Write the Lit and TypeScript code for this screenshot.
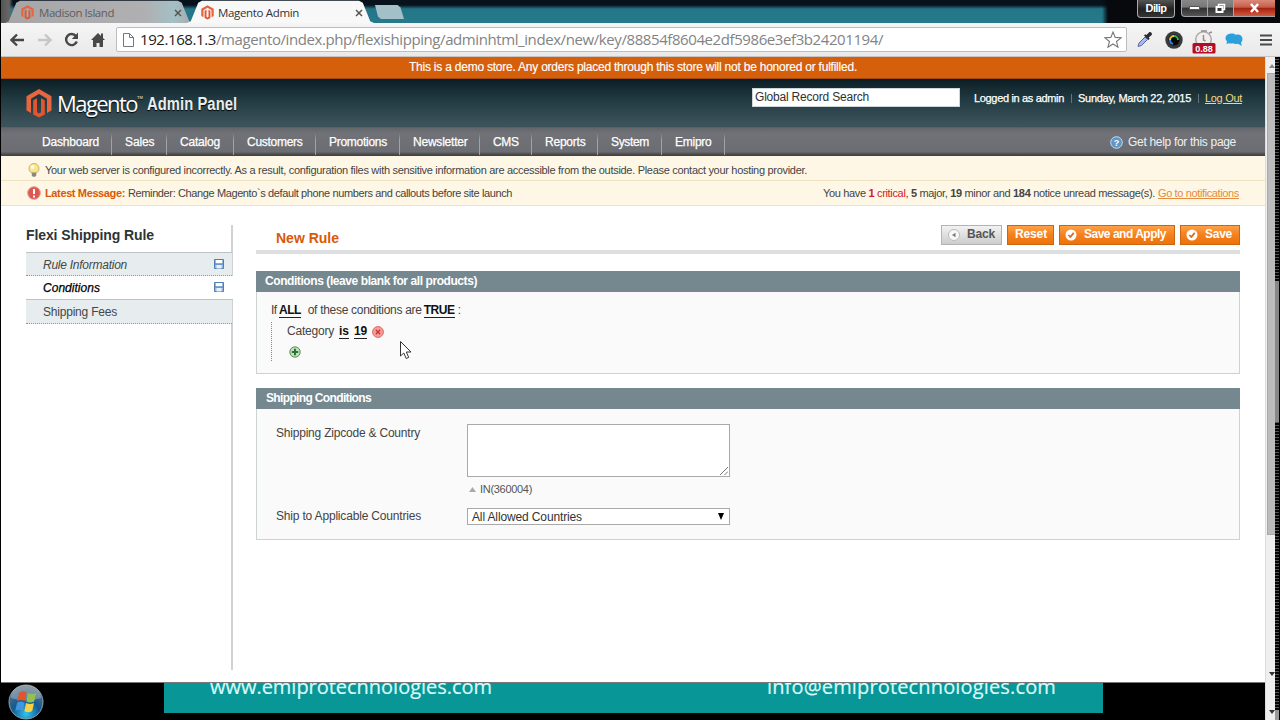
import { LitElement, html, css } from "lit";
import { customElement, property } from "lit/decorators.js";

/** Text run whose tracking is computed so that it fills a given width. */
@customElement("fit-text")
class FitText extends LitElement {
  @property({ type: Number }) w = 0;
  static styles = css`
    :host { display: inline-block; white-space: nowrap; flex: none; }
  `;
  render() { return html`<slot></slot>`; }
  firstUpdated() {
    const n = (this.textContent || "").length;
    const natural = parseFloat(getComputedStyle(this).width);
    if (this.w && n) this.style.letterSpacing = ((this.w - natural) / n).toFixed(4) + "px";
  }
}

const magento = (cls: string) => html`<svg class=${cls} viewBox="0 0 26 29">
  <path d="M13 0 L25.500 7.200 V21.500 L21 24 V9.800 L13 5.100 L5 9.800 V24 L.5 21.500 V7.200 Z" fill="#e8663f"/>
  <path d="M7.200 11.200 L11 9.200 V23.200 L13 24.400 L15 23.200 V9.200 L18.800 11.200 V25.400 L13 28.600 L7.200 25.400 Z" fill="#e2552d"/>
</svg>`;

const disk = html`<svg class="disk" viewBox="0 0 10 10"><path d="M.5.5h9v9h-9z" fill="#9ab9dc" stroke="#4f7db5"/><path d="M2 1h6v3.500H2z" fill="#fff"/><path d="M2.500 6h5v3.500h-5z" fill="#e8f0fa"/><path d="M1 5h8" stroke="#4778b0"/></svg>`;

const check = html`<svg class="bi" viewBox="0 0 12 12"><circle cx="6" cy="6" r="5.500" fill="#fff"/><path d="M3.400 6l2 2L8.700 3.900" fill="none" stroke="#d9681c" stroke-width="1.700"/></svg>`;

const NAV: [string, number, number][] = [
  ["Dashboard", 83, 57], ["Sales", 55, 29.5], ["Catalog", 67, 40], ["Customers", 82, 55.500],
  ["Promotions", 84, 58], ["Newsletter", 80, 54.500], ["CMS", 52, 25.500], ["Reports", 66, 40.500],
  ["System", 64, 38], ["Emipro", 63, 36.500],
];

@customElement("app-root")
class AppRoot extends LitElement {
  static styles = css`
    :host { display: block; width: 1280px; height: 720px; overflow: hidden; background: #000; font: 12px/16px "Liberation Sans", Arial, sans-serif; color: #2f2f2f; }
    * { box-sizing: border-box; }
    svg { display: block; flex: none; }
    .window { display: flex; flex-direction: column; height: 720px; padding-left: 1px; }

    .tabs { height: 23px; display: flex; padding-left: 4px; font: 11.5px/16px "Open Sans", "Noto Sans", sans-serif;
      background: linear-gradient(90deg, #555 0, #666 8px, transparent 12px), linear-gradient(90deg, transparent 1101px, #07090d 1107px), linear-gradient(#07121d 0 5px, #237688 9px, #267a8c 100%); }
    .tab { height: 23px; display: flex; align-items: center; padding: 2px 11px 0 16px; clip-path: polygon(0 100%, 2% 92%, 6% 12%, 8% 3%, 92% 3%, 94% 12%, 98% 92%, 100% 100%); }
    .tab1 { width: 188px; background: linear-gradient(90deg, #a6a6a8, #b0b0b2 75%, #a3c0c5 90%, #a7a9ac); color: #5d5d60; }
    .tab2 { width: 187px; margin-left: -6px; padding-left: 14px; background: #f8f8f8; color: #333; }
    .fav { width: 13px; height: 15px; margin-right: 5px; }
    .tab2 .fav { margin-right: 4px; }
    .tab .x { margin-left: auto; width: 8px; height: 8px; }
    .newtab { width: 29px; height: 14px; margin: 5px 0 0 1px; background: #a3c0c8; clip-path: polygon(0 0, 78% 0, 88% 18%, 100% 100%, 20% 100%, 10% 80%); }
    .winbtns { margin-left: auto; display: flex; height: 18px; padding-right: 5px; }
    .user { width: 38px; height: 18px; margin-right: 6px; border: 1px solid #aaa; border-top: 0; border-radius: 0 0 4px 4px; background: linear-gradient(#555, #222 55%, #333); color: #fff; font: bold 11px/16px "Liberation Sans"; text-align: center; }
    .ctl { height: 17px; border: 1px solid #a5a5a5; border-top: 0; display: flex; align-items: center; justify-content: center; background: linear-gradient(#888, #777 45%, #303030 50%, #555); }
    .min { width: 27px; border-radius: 0 0 0 4px; } .res { width: 26px; border-left: 0; } .cls { width: 41px; border-left: 0; border-right: 0; background: linear-gradient(#d98a7a, #c85c48 45%, #a52210 52%, #d05a40); }

    .toolbar { height: 34px; display: flex; align-items: center; background: linear-gradient(#f5f5f5, #e9e9e9); border-bottom: 1px solid #c9c4bf; padding: 0 5px 0 9px; }
    .back { width: 14px; height: 14px; } .fwd { width: 14px; height: 14px; margin-left: 14px; } .reload { width: 15px; height: 15px; margin-left: 12px; } .home { width: 14px; height: 15px; margin-left: 12px; }
    .omni { width: 1011px; height: 25px; margin-left: 11px; border: 1px solid #bdbdbd; border-radius: 2px; background: #fff; display: flex; align-items: center; padding: 0 4px 0 6px; font: 15px/23px "Open Sans", "Noto Sans", sans-serif; color: #838383; }
    .omni b { font-weight: 400; color: #222; }
    .page { width: 11px; height: 14px; margin-right: 6px; }
    .star { width: 18px; height: 17px; margin-left: auto; }
    .ext { display: flex; align-items: center; flex: 1; }
    .pick { width: 17px; height: 17px; margin-left: 9px; } .cam { width: 18px; height: 18px; margin-left: 12px; }
    .clock { width: 24px; height: 26px; margin: 6px 0 0 9px; } .chat { width: 18px; height: 14px; margin-left: 9px; } .menu { width: 12px; height: 12px; margin-left: auto; margin-right: 3px; }

    .view { display: flex; height: 663px; }
    .doc { width: 1264px; display: flex; flex-direction: column; background: #fff; }
    .demo { height: 22px; background: #d65f0c; color: #fff; display: flex; padding: 2px 0 0 408px; line-height: 17px; border-bottom: 1px solid #a54a0d; -webkit-text-stroke: .15px #fff; }
    .head { height: 49px; display: flex; background: linear-gradient(#0c1d24, #203840 40%, #3c535b 95%); color: #fff; padding-left: 25px; border-bottom: 1px solid #53646a; }
    .logo { width: 26px; height: 29px; margin: 10px 5px 0 0; }
    .brand { font: 22px/26px "Open Sans", "Noto Sans", sans-serif; margin-top: 11px; width: 84px; text-shadow: 0 1px 1px #000; display: flex; }
    .tm { font: 4px/8px "Liberation Sans"; padding-top: 4px; }
    .panel { font: bold 18px/24px "Liberation Sans"; width: 92px; margin: 13px 0 0 6px; color: #e8eeee; text-shadow: 0 1px 1px #000; transform: scaleX(.82); transform-origin: left; }
    .search { width: 208px; height: 19px; margin: 9px 14px 0 auto; background: #fff; border: 1px solid #ccd5d8; color: #303030; padding: 0 2px; line-height: 17px; }
    .acct { display: flex; font-size: 11px; line-height: 14px; margin-top: 12px; padding-right: 23px; -webkit-text-stroke: .25px #fff; }
    .acct i { width: 1px; height: 9px; margin: 3px 6.5px 0; background: #66777b; }
    .acct a { color: #f6d77e; -webkit-text-stroke: 0; }
    a fit-text { text-decoration: underline; }
    .nav { height: 28px; display: flex; background: linear-gradient(#63666b, #707277 20%, #6b6d72 85%, #444 96%); color: #fff; padding-left: 28px; line-height: 15px; -webkit-text-stroke: .25px #fff; }
    .nav div { padding: 7px 0 0 13px; height: 27px; background: linear-gradient(transparent 5px, #a1a3a6 12px) right / 1px 100% no-repeat; }
    .help { margin-left: auto; display: flex; padding: 7px 29px 0 0; color: #f1f1f1; -webkit-text-stroke: 0; }
    .help svg { width: 13px; height: 13px; margin: 1px 5px 0 0; }
    .note { height: 25px; display: flex; align-items: center; background: #fef7e6; border-bottom: 1px solid #eee2c2; padding: 3px 26px 0 26px; font-size: 11px; color: #444; }
    .note2 { padding-top: 0; }
    .note svg { width: 14px; height: 14px; margin-right: 4px; }
    .note .lm { color: #d85909; font-weight: 700; margin-right: 3px; }
    .note .right { margin-left: auto; } .crit { color: #d0202b; } .note a { color: #e58a3e; margin-left: 3px; }

    .body { flex: 1; display: flex; padding: 19px 25px 0 25px; min-height: 0; }
    .side { width: 207px; height: 445px; border-right: 2px solid #d0d2d3; }
    .side h3 { margin: 0; height: 27px; font-size: 14px; line-height: 20px; color: #2d3434; }
    .side ul { margin: 0; padding: 0; list-style: none; }
    .side li { height: 24px; width: 206px; display: flex; align-items: center; background: #e7ecee; border-bottom: 1px dotted #8f9999; padding: 1px 8px 0 17px; color: #424848; }
    .side li.first { border-top: 1px solid #bdc4c7; font-style: italic; }
    .side li.on { background: #fff; border-bottom: 1px solid #bbc2c5; font-style: italic; color: #000; width: 207px; padding-right: 9px; -webkit-text-stroke: .25px #000; }
    .disk { width: 10px; height: 10px; margin: -2px 0 0 auto; }
    .main { flex: 1; padding-left: 23px; }
    .title { height: 29px; border-bottom: 4px solid #dedfe1; display: flex; padding-left: 20px; }
    .title h2 { margin: 5px auto 0 0; font-size: 14px; line-height: 17px; color: #d85909; }
    .btn { height: 20px; border: 1px solid #c9660f; background: linear-gradient(#ffa044, #f4801e 50%, #ee7208); color: #fff; font: bold 12px/17px "Liberation Sans"; display: flex; margin-left: 5px; padding-left: 7px; }
    .bi { width: 12px; height: 12px; margin: 3px 7px 0 -2px; }
    .b1 { width: 61px; border-color: #b3b3b3; background: linear-gradient(#f2f2f2, #ccc); color: #555; padding-left: 8px; } .b2 { width: 47px; } .b3 { width: 116px; } .b4 { width: 60px; }
    .head4 { height: 21px; background: #75888f; color: #fff; font-weight: 700; padding: 2px 0 0 9px; line-height: 16px; }
    .box { border: 1px solid #cdd2d3; border-top: 0; background: #fafafa; color: #444; }
    .c1 { margin-top: 17px; } .bx1 { height: 82px; padding: 10px 0 0 14px; }
    .row { display: flex; align-items: center; height: 16px; }
    .row u { color: #111; font-weight: 700; text-decoration: none; border-bottom: 1px solid #222; line-height: 12px; height: 14px; margin-top: 1px; }
    .true { margin: 0 3px 0 2px; }
    .op { margin-left: 5px; }
    .tree { margin-top: 4px; height: 39px; border-left: 1px dotted #888; padding: 1px 0 0 15px; }
    .dot { width: 12px; height: 12px; }
    .plus { margin: 7px 0 0 2px; } .del { margin: 2px 0 0 5px; }
    .c2 { margin-top: 14px; padding-left: 10px; } .bx2 { height: 131px; padding: 14px 0 0 19px; }
    .field { display: flex; }
    .field label { width: 191px; padding-top: 2px; }
    .area { width: 263px; height: 53px; margin-top: 1px; border: 1px solid #a9a9a9; background: #fff; display: flex; align-items: flex-end; justify-content: flex-end; }
    .area svg { width: 8px; height: 8px; margin: 0 1px 1px 0; }
    .hint { display: flex; align-items: center; font-size: 11px; margin: 4px 0 11px 193px; color: #555; }
    .hint svg { width: 7px; height: 5px; margin: 0 4px 0 0; }
    .sel { width: 263px; height: 17px; border: 1px solid #a9a9a9; background: #fff; color: #333; display: flex; align-items: center; padding: 0 5px 0 4px; line-height: 14px; }
    .sel svg { width: 6px; height: 7px; margin-left: auto; }
    .f2 label { padding-top: 0; line-height: 17px; }
    .cursor { position: absolute; left: 399px; top: 340px; width: 13px; height: 20px; }

    .task { height: 38px; background: #000; display: flex; border-top: 1px solid #777; overflow: hidden; }
    .orb { width: 36px; height: 36px; margin: 1px 0 0 7px; }
    .banner { width: 939px; height: 30px; margin-left: 120px; background: #089796; color: #d9fbfb; display: flex; overflow: hidden; font: 20px/26px "Open Sans", "Noto Sans", sans-serif; padding-left: 46px; -webkit-text-stroke: .2px #d9fbfb; }
    .banner fit-text { margin-top: -9px; height: 30px; } .banner .mail { margin-left: 275px; }
    .scroll { width: 10px; background: #efefef; display: flex; flex-direction: column; align-items: flex-end; border-left: 1px solid #ddd; }
    .thumb { width: 8px; height: 462px; background: #bcbcbc; border: 1px solid #aaa; border-right: 0; }
    .ar { width: 6px; height: 4px; }
    .u { margin: 7px 0 5px; } .d1 { margin-top: 137px; } .d2 { margin-top: 34px; }
    .noise { flex: 1; background: linear-gradient(transparent 224px, #888 224px 365px, transparent 365px 653px, #999 653px), repeating-linear-gradient(#050505 0 2px, #555 2px 3px); border-right: 1px solid #000; }
  `;

  render() {
    const x = html`<svg class="x" viewBox="0 0 8 8"><path d="M1 1l6 6M7 1l-6 6" stroke="#555" stroke-width="1.500"/></svg>`;
    return html`<div class="window">
      <div class="tabs">
        <div class="tab tab1">${magento("fav")}<fit-text w="75">Madison Island</fit-text>${x}</div>
        <div class="tab tab2">${magento("fav")}<fit-text w="81">Magento Admin</fit-text>${x}</div>
        <div class="newtab"></div>
        <div class="winbtns">
          <div class="user"><fit-text w="21">Dilip</fit-text></div>
          <div class="ctl min"><svg width="11" height="4"><path d="M.5.5h10v3H.5z" fill="#fff" stroke="#555"/></svg></div>
          <div class="ctl res"><svg width="11" height="11" viewBox="0 0 11 11"><path d="M3.500 3V1.500h6v5H8" fill="none" stroke="#fff" stroke-width="1.500"/><path d="M1.500 4h6v5h-6z" fill="none" stroke="#fff" stroke-width="2"/></svg></div>
          <div class="ctl cls"><svg width="11" height="10" viewBox="0 0 11 10"><path d="M2 1l7 8M9 1L2 9" stroke="#fff" stroke-width="2.500"/></svg></div>
        </div>
      </div>
      <div class="toolbar">
        <svg class="back" viewBox="0 0 14 14"><path d="M14 7H2M7 1.500L1.500 7L7 12.500" fill="none" stroke="#454545" stroke-width="2.300"/></svg>
        <svg class="fwd" viewBox="0 0 14 14"><path d="M0 7h12M7 1.500L12.500 7L7 12.500" fill="none" stroke="#c6c6c6" stroke-width="2.300"/></svg>
        <svg class="reload" viewBox="0 0 15 15"><path d="M12 4.200A5.500 5.500 0 1 0 12.800 9.500" fill="none" stroke="#484848" stroke-width="2.400"/><path d="M14 .5V7H7.800z" fill="#484848"/></svg>
        <svg class="home" viewBox="0 0 14 15"><path d="M7 1L0 8h2v7h3.500v-4h3v4H12V8h2L12 6V1.500H10V4z" fill="#484848"/></svg>
        <div class="omni">
          <svg class="page" viewBox="0 0 11 14"><path d="M.5.5h6l4 4v9H.5zM6.500.5v4h4" fill="#fff" stroke="#777"/></svg>
          <fit-text w="743"><b>192.168.1.3</b>/magento/index.php/flexishipping/adminhtml_index/new/key/88854f8604e2df5986e3ef3b24201194/</fit-text>
          <svg class="star" viewBox="0 0 18 17"><path d="M9 1l2.200 5.400 5.800.4-4.500 3.700 1.500 5.700L9 13l-5 3.200 1.500-5.700L1 6.800l5.800-.4z" fill="#fff" stroke="#777" stroke-width="1.100"/></svg>
        </div>
        <div class="ext">
          <svg class="pick" viewBox="0 0 17 17"><path d="M2 15.500L3 12l6-6 2.500 2.500-6 6z" fill="#a9b8ec" stroke="#5868a8"/><path d="M8 4.500l4.500 4.500 1.200-1.200-1-1.300 3-2.500c1-1.500-1-3.500-2.500-2.700L10.500 4 9.200 3.200z" fill="#292b30"/></svg>
          <svg class="cam" viewBox="0 0 18 18"><circle cx="9" cy="9" r="8.700" fill="#3a3a3c"/><circle cx="9" cy="9" r="5.500" fill="#080808"/><path d="M5 9a4 4 0 0 1 4-4" stroke="#e8c52c" stroke-width="2" fill="none"/><path d="M9 5a4 4 0 0 1 4 4" stroke="#36b34a" stroke-width="2" fill="none"/><path d="M5 9a4 4 0 0 0 3 3.900" stroke="#2f7fe0" stroke-width="2" fill="none"/></svg>
          <svg class="clock" viewBox="0 0 24 26"><circle cx="11.500" cy="9.500" r="7.800" fill="#f2eeee" stroke="#b0a8a8" stroke-width="1.500"/><path d="M9 1h6M17 3l3-1M11.500 5v5l2 1" stroke="#9c8c8c" stroke-width="1.500" fill="none"/><rect x=".5" y="13" width="23" height="10.500" rx="1.500" fill="#b50c26"/><text x="12" y="21.500" font-family="Liberation Sans" font-weight="700" font-size="9" text-anchor="middle" fill="#fff">0.88</text></svg>
          <svg class="chat" viewBox="0 0 18 14"><path d="M6 .5c3 0 3.500.5 4.500 1.200C15 .8 17.500 3 17.500 6c0 2-.8 3-1.500 3.500l.8 3.500-3.800-2.200c-2 .5-4 .2-5-.6-1.500.5-3 .3-4 0L1.500 11l.5-2.500C-1 5.500.5.8 6 .5z" fill="#2ba0dc"/></svg>
          <svg class="menu" viewBox="0 0 12 12"><path d="M0 1.500h12M0 6h12M0 10.500h12" stroke="#4a4a4a" stroke-width="2.200"/></svg>
        </div>
      </div>
      <div class="view">
        <div class="doc">
          <div class="demo"><fit-text w="448">This is a demo store. Any orders placed through this store will not be honored or fulfilled.</fit-text></div>
          <div class="head">
            ${magento("logo")}
            <div class="brand"><fit-text w="80">Magento</fit-text><span class="tm">TM</span></div>
            <div class="panel"><fit-text w="110">Admin Panel</fit-text></div>
            <div class="search"><fit-text w="114">Global Record Search</fit-text></div>
            <div class="acct"><fit-text w="90">Logged in as admin</fit-text><i></i><fit-text w="113">Sunday, March 22, 2015</fit-text><i></i><a><fit-text w="37">Log Out</fit-text></a></div>
          </div>
          <div class="nav">
            ${NAV.map(([t, w, f]) => html`<div style="width:${w}px"><fit-text w=${f}>${t}</fit-text></div>`)}
            <span class="help"><svg viewBox="0 0 13 13"><circle cx="6.500" cy="6.500" r="5.800" fill="#5f96c8" stroke="#c5def2"/><text x="6.500" y="9.800" font-family="Liberation Sans" font-size="9" font-weight="700" text-anchor="middle" fill="#fff">?</text></svg><fit-text w="108">Get help for this page</fit-text></span>
          </div>
          <div class="note">
            <svg viewBox="0 0 14 14"><circle cx="7" cy="5.500" r="5" fill="#fbe58c" stroke="#c9b06a"/><circle cx="5.500" cy="4" r="2" fill="#fffbe0"/><path d="M4.800 9.500h4.400v3l-1 1.200H5.800l-1-1.200z" fill="#8d8878"/></svg>
            <fit-text w="762">Your web server is configured incorrectly. As a result, configuration files with sensitive information are accessible from the outside. Please contact your hosting provider.</fit-text>
          </div>
          <div class="note note2">
            <svg viewBox="0 0 14 14"><circle cx="7" cy="7" r="6.300" fill="#dc5850" stroke="#e89890"/><path d="M7 3v5M7 9.500v2" stroke="#fff" stroke-width="2"/></svg>
            <fit-text class="lm" w="80">Latest Message:</fit-text><fit-text w="384">Reminder: Change Magento\`s default phone numbers and callouts before site launch</fit-text>
            <fit-text class="right" w="332">You have <span class="crit"><b>1</b> critical</span>, <b>5</b> major, <b>19</b> minor and <b>184</b> notice unread message(s).</fit-text><a><fit-text w="81">Go to notifications</fit-text></a>
          </div>
          <div class="body">
            <div class="side">
              <h3><fit-text w="128">Flexi Shipping Rule</fit-text></h3>
              <ul>
                <li class="first"><fit-text w="84">Rule Information</fit-text>${disk}</li>
                <li class="on"><fit-text w="57">Conditions</fit-text>${disk}</li>
                <li><fit-text w="74">Shipping Fees</fit-text></li>
              </ul>
            </div>
            <div class="main">
              <div class="title">
                <h2><fit-text w="63">New Rule</fit-text></h2>
                <div class="btn b1"><svg class="bi" viewBox="0 0 12 12"><circle cx="6" cy="6" r="5.500" fill="#f8f8f8" stroke="#bbb"/><path d="M7.500 3.800v4.400L4 6z" fill="#777"/></svg><fit-text w="28">Back</fit-text></div>
                <div class="btn b2"><fit-text w="32">Reset</fit-text></div>
                <div class="btn b3">${check}<fit-text w="82">Save and Apply</fit-text></div>
                <div class="btn b4">${check}<fit-text w="27">Save</fit-text></div>
              </div>
              <div class="head4 c1"><fit-text w="212">Conditions (leave blank for all products)</fit-text></div>
              <div class="box bx1">
                <div class="row"><fit-text w="8">If&nbsp;</fit-text><u><fit-text w="22">ALL</fit-text></u>&nbsp;&nbsp;<fit-text w="114">of these conditions are</fit-text><u class="true"><fit-text w="31">TRUE</fit-text></u>:</div>
                <div class="tree">
                  <div class="row"><fit-text w="47">Category</fit-text><u class="op"><fit-text w="10">is</fit-text></u><u class="op"><fit-text w="13">19</fit-text></u>
                    <svg class="dot del" viewBox="0 0 12 12"><circle cx="6" cy="6" r="5.400" fill="#f3a09a" stroke="#e0635d"/><path d="M3.800 3.800l4.400 4.400M8.200 3.800L3.800 8.200" stroke="#d02e2a" stroke-width="1.300"/></svg></div>
                  <svg class="dot plus" viewBox="0 0 12 12"><circle cx="6" cy="6" r="5.200" fill="#bfe0bd" stroke="#5b8f5a"/><path d="M6 2.800v6.400M2.800 6h6.400" stroke="#2f7335" stroke-width="2"/></svg>
                </div>
              </div>
              <div class="head4 c2"><fit-text w="105">Shipping Conditions</fit-text></div>
              <div class="box bx2">
                <div class="field"><label><fit-text w="144">Shipping Zipcode &amp; Country</fit-text></label><div class="area"><svg viewBox="0 0 8 8"><path d="M0 8L8 0M4.500 8L8 4.500" stroke="#777"/></svg></div></div>
                <div class="hint"><svg viewBox="0 0 7 5"><path d="M3.500 0L7 5H0z" fill="#aaa"/></svg><fit-text w="52">IN(360004)</fit-text></div>
                <div class="field f2"><label><fit-text w="145">Ship to Applicable Countries</fit-text></label><div class="sel"><fit-text w="110">All Allowed Countries</fit-text><svg viewBox="0 0 6 7"><path d="M0 0h6L3 7z" fill="#000"/></svg></div></div>
              </div>
            </div>
          </div>
          <div class="task">
            <svg class="orb" viewBox="0 0 36 36"><defs><radialGradient id="o" cx=".5" cy=".85" r=".8"><stop offset="0" stop-color="#2fc4ee"/><stop offset=".5" stop-color="#145a92"/><stop offset="1" stop-color="#5f7482"/></radialGradient></defs><circle cx="18" cy="18" r="17" fill="url(#o)" stroke="#8aa3b0"/><path d="M3 14a15 13 0 0 1 30 0q-15 5-30 0z" fill="#fff" opacity=".28"/><path d="M11 9q4-3 7.500-.5L16.800 17q-4-2-7.500.2z" fill="#e2552b"/><path d="M20 9q4 2 8 0l-1.800 8.500q-4 2-7.800 0z" fill="#94c14b"/><path d="M9 18.700q3.500-2.200 7.500 0L15 27q-4-2.500-7.500-.2z" fill="#4196dc"/><path d="M18 19q4 2 8 0l-1.800 8q-4 2.500-7.800.3z" fill="#f8cf45"/></svg>
            <div class="banner"><fit-text w="282">www.emiprotechnologies.com</fit-text><fit-text class="mail" w="289">info@emiprotechnologies.com</fit-text></div>
          </div>
        </div>
        <div class="scroll">
          <svg class="ar u" viewBox="0 0 6 4"><path d="M3 0l3 4H0z" fill="#888"/></svg>
          <div class="thumb"></div>
          <svg class="ar d1" viewBox="0 0 6 4"><path d="M0 0h6L3 4z" fill="#333"/></svg>
          <svg class="ar d2" viewBox="0 0 6 4"><path d="M0 0h6L3 4z" fill="#333"/></svg>
        </div>
        <div class="noise"></div>
      </div>
    </div>
    <svg class="cursor" viewBox="0 0 13 20"><path d="M1.500 1.500V16l3.300-3 2.400 5.500 2.500-1.100L7.300 12H12z" fill="#fff" stroke="#333"/></svg>`;
  }
}
